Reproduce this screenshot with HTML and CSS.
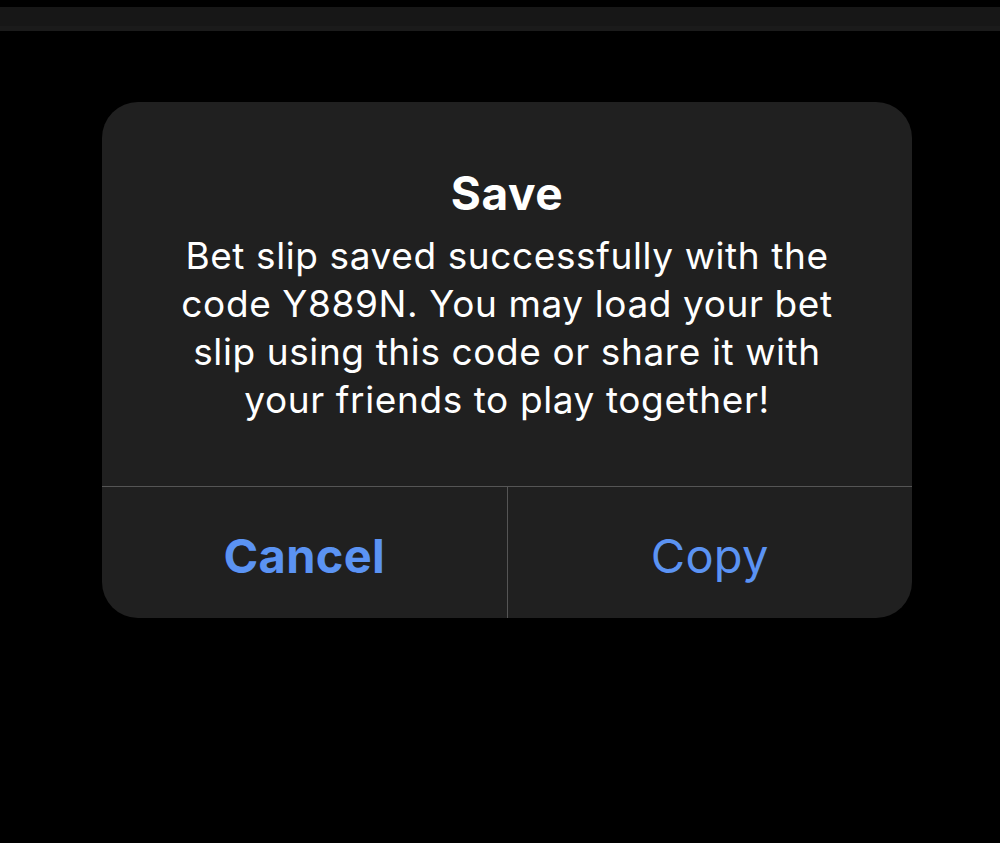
FILE: index.html
```html
<!DOCTYPE html>
<html lang="en">
<head>
<meta charset="utf-8">
<title>Save</title>
<link rel="stylesheet" href="styles.css">
</head>
<body>
<div class="topbar"></div>
<div class="stage">
  <div class="alert">
    <div class="content">
      <h1 class="title">Save</h1>
      <p class="message">Bet slip saved successfully with the code Y889N. You may load your bet slip using this code or share it with your friends to play together!</p>
    </div>
    <div class="actions">
      <button class="action cancel">Cancel</button>
      <button class="action copy">Copy</button>
    </div>
  </div>
</div>
</body>
</html>
```
FILE: styles.css
```css
* { box-sizing: border-box; }
html, body {
  margin: 0;
  padding: 0;
  background: #000;
  width: 1000px;
  height: 843px;
  overflow: hidden;
  font-family: Inter, "Noto Sans", "Liberation Sans", sans-serif;
}
.topbar {
  margin-top: 7px;
  height: 24px;
  background: #171717;
  border-bottom: 5px solid #1b1b1b;
}
.stage {
  padding: 71px 88px 0 102px;
}
.alert {
  width: 810px;
  height: 516px;
  background: #202020;
  border-radius: 36px;
  display: flex;
  flex-direction: column;
  overflow: hidden;
}
.content {
  height: 384px;
  padding: 62px 70px 0;
  text-align: center;
  color: #fff;
}
.title {
  margin: 0;
  font-size: 46px;
  font-weight: 700;
  line-height: 58px;
  letter-spacing: 0.6px;
}
.message {
  margin: 10px 0 0;
  font-size: 37px;
  font-weight: 400;
  line-height: 48px;
  letter-spacing: 0.6px;
}
.actions {
  flex: 1;
  display: flex;
  border-top: 1px solid #555;
}
.action {
  flex: 1;
  background: none;
  border: 0;
  margin: 0;
  padding: 6px 0 0;
  color: #5b93f3;
  font-family: inherit;
  font-size: 47px;
  letter-spacing: 0.3px;
}
.cancel {
  font-weight: 700;
  border-right: 1px solid #555;
}
.copy {
  font-weight: 400;
}
```
